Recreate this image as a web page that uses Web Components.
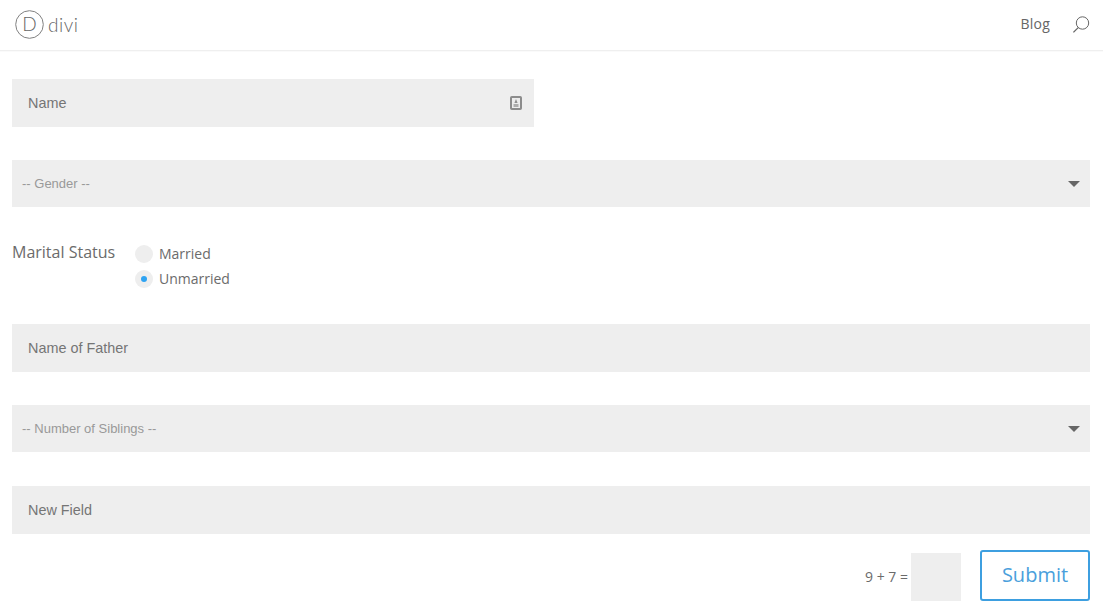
<!DOCTYPE html>
<html>
<head>
<meta charset="utf-8">
<title>divi</title>
<style>
html, body { margin: 0; padding: 0; background: #fff; overflow: hidden; }
body { height: 601px; font-family: "Open Sans", sans-serif; color: #666; }
</style>
</head>
<body>
<divi-page>
    <divi-header slot="header"></divi-header>
    <divi-field style="width:522px;margin-top:28px" icon>Name</divi-field>
    <divi-select style="margin-top:33px">-- Gender --</divi-select>
    <divi-radios style="margin-top:33px" label="Marital Status">
        <divi-radio>Married</divi-radio>
        <divi-radio checked>Unmarried</divi-radio>
    </divi-radios>
    <divi-field style="margin-top:32px">Name of Father</divi-field>
    <divi-select style="margin-top:33px">-- Number of Siblings --</divi-select>
    <divi-field style="margin-top:34px">New Field</divi-field>
    <divi-captcha style="margin-top:16px" sum="9 + 7 =" label="Submit"></divi-captcha>
</divi-page>

<script>
class DiviPage extends HTMLElement {
    constructor() {
        super();
        this.attachShadow({mode: 'open'}).innerHTML = `<style>
            :host { display: block; }
            main { display: flex; flex-direction: column; padding: 0 13px 0 12px; }
        </style>
        <slot name="header"></slot>
        <main><slot></slot></main>`;
    }
}

class DiviHeader extends HTMLElement {
    constructor() {
        super();
        this.attachShadow({mode: 'open'}).innerHTML = `<style>
            :host { display: block; }
            header { height: 51px; box-sizing: border-box; border-bottom: 1px solid #efefef;
                display: flex; align-items: center; justify-content: space-between;
                padding: 0 13px 2px 15px; box-shadow: 0 1px 0 rgba(0,0,0,.02); }
            .logo { display: flex; align-items: center; gap: 4px; }
            .logo svg { display: block; }
            .word { font: 300 19px/20px Lato, sans-serif; color: #666; letter-spacing: .5px; margin-top: 2px; }
            .D { font: 300 19px Lato, sans-serif; fill: #666; }
            nav { display: flex; align-items: center; gap: 22px; }
            .blog { font: 500 14px/18px "Open Sans", sans-serif; color: #666; letter-spacing: .2px; margin-top: -1px; }
        </style>
        <header>
            <div class="logo">
                <svg width="29" height="29" viewBox="0 0 29 29">
                    <circle cx="14.5" cy="14.5" r="13.8" fill="none" stroke="#808080" stroke-width="1"/>
                    <text class="D" x="14.5" y="21" text-anchor="middle">D</text>
                </svg>
                <span class="word">divi</span>
            </div>
            <nav>
                <span class="blog">Blog</span>
                <svg width="18" height="18" viewBox="0 0 18 18">
                    <circle cx="10.5" cy="8" r="6.2" fill="none" stroke="#666" stroke-width="1"/>
                    <path d="M6.2 12.6 L1.4 17.4" fill="none" stroke="#666" stroke-width="1.3"/>
                </svg>
            </nav>
        </header>`;
    }
}

class DiviField extends HTMLElement {
    constructor() {
        super();
        this.attachShadow({mode: 'open'}).innerHTML = `<style>
            :host { display: flex; align-items: center; justify-content: space-between; box-sizing: border-box;
                height: 48px; background: #eee; padding: 0 12px 0 16px;
                font: 14.4px "Liberation Sans", Arial, sans-serif; color: #757575; }
            svg { display: block; }
        </style>
        <span><slot></slot></span>
        ${this.hasAttribute('icon') ? `<svg width="12" height="14" viewBox="0 0 12 14">
            <rect x="1" y="1" width="10" height="12" rx=".8" fill="#ececec" stroke="#8c8c8c" stroke-width="2"/>
            <path d="M6 3 L7.6 7 H4.4 Z" fill="#909090"/>
            <rect x="3.5" y="8" width="5" height="3" fill="#adadad"/>
        </svg>` : ''}`;
    }
}

class DiviSelect extends HTMLElement {
    constructor() {
        super();
        this.attachShadow({mode: 'open'}).innerHTML = `<style>
            :host { display: flex; align-items: center; justify-content: space-between; box-sizing: border-box;
                height: 47px; background: #eee; padding: 0 10px;
                font: 13px "Liberation Sans", Arial, sans-serif; color: #999; }
            i { width: 0; height: 0; border-left: 6.5px solid transparent; border-right: 6.5px solid transparent;
                border-top: 6px solid #666; margin-top: 1px; }
        </style>
        <span><slot></slot></span><i></i>`;
    }
}

class DiviRadios extends HTMLElement {
    constructor() {
        super();
        this.attachShadow({mode: 'open'}).innerHTML = `<style>
            :host { display: flex; align-items: flex-start; height: 52px; box-sizing: border-box; padding-top: 2px; }
            .label { font: 16px/20px "Open Sans", sans-serif; color: #6b6b6b; width: 123px; }
            .list { display: flex; flex-direction: column; gap: 5px; padding-top: 2px; }
        </style>
        <span class="label">${this.getAttribute('label')}</span>
        <div class="list"><slot></slot></div>`;
    }
}

class DiviRadio extends HTMLElement {
    constructor() {
        super();
        this.attachShadow({mode: 'open'}).innerHTML = `<style>
            :host { display: flex; align-items: center; gap: 6px; height: 20px;
                font: 14px/20px "Open Sans", sans-serif; color: #6b6b6b; }
            .dot { width: 18px; height: 18px; border-radius: 50%; background: #eee;
                display: flex; align-items: center; justify-content: center; }
            .dot i { width: 6px; height: 6px; border-radius: 50%; background: #2ea3f2; }
        </style>
        <span class="dot">${this.hasAttribute('checked') ? '<i></i>' : ''}</span>
        <span><slot></slot></span>`;
    }
}

class DiviCaptcha extends HTMLElement {
    constructor() {
        super();
        this.attachShadow({mode: 'open'}).innerHTML = `<style>
            :host { display: flex; align-items: center; justify-content: flex-end; height: 51px; }
            .sum { font: 14px/20px "Open Sans", sans-serif; color: #6b6b6b; margin: 3px 3px 0 0; }
            .box { width: 50px; height: 48px; background: #eee; margin: 3px 19px 0 0; }
            button { width: 110px; height: 51px; box-sizing: border-box; background: #fff; padding: 0;
                border: 2px solid #3d9fe0; border-radius: 3px; color: #4a9fdc; margin-top: -1px;
                font: 20px/24px "Open Sans", sans-serif; }
        </style>
        <span class="sum">${this.getAttribute('sum')}</span>
        <div class="box"></div>
        <button type="button">${this.getAttribute('label')}</button>`;
    }
}

customElements.define('divi-page', DiviPage);
customElements.define('divi-header', DiviHeader);
customElements.define('divi-field', DiviField);
customElements.define('divi-select', DiviSelect);
customElements.define('divi-radios', DiviRadios);
customElements.define('divi-radio', DiviRadio);
customElements.define('divi-captcha', DiviCaptcha);
</script>
</body>
</html>
